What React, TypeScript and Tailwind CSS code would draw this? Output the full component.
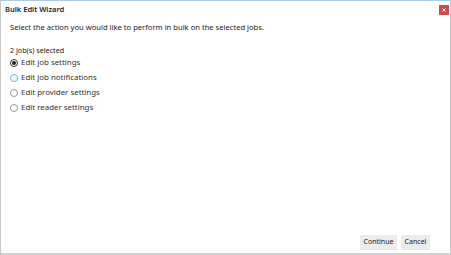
export default function App() {
  const options = [
    "Edit job settings",
    "Edit job notifications",
    "Edit provider settings",
    "Edit reader settings",
  ];

  return (
    <div className="w-[451px] h-[255px] bg-white" style={{ fontFamily: '"Noto Sans", "Open Sans", sans-serif' }}>
      <div className="w-[451px] h-[255px] flex flex-col border-t border-t-[#a9cbe8] border-l border-l-[#c8c8c8] border-r border-r-[#c8c8c8] border-b-2 border-b-[#d2d2d2]">
        {/* Title bar */}
        <div className="flex items-start justify-between pl-[4px] pr-[1px] h-[19px]">
          <span className="mt-[3px] text-[7.5px] leading-[10px] font-semibold text-[#1e1e36]">Bulk Edit Wizard</span>
          <button className="w-[10px] h-[10px] bg-[#d04b4b] flex items-center justify-center mt-[4px]">
            <svg width="4" height="4" viewBox="0 0 4 4">
              <path d="M0.5 0.5 L3.5 3.5 M3.5 0.5 L0.5 3.5" stroke="white" strokeWidth="1" />
            </svg>
          </button>
        </div>

        {/* Body */}
        <div className="flex-1 flex flex-col pl-[9px] pt-[1px]">
          <p className="text-[7.6px] leading-[12px] text-[#222]">
            Select the action you would like to perform in bulk on the selected jobs.
          </p>
          <div className="mt-[12px] text-[7.2px] leading-[10px] text-[#222]">2 job(s) selected</div>
          <div className="flex flex-col">
            {options.map((o, i) => (
              <label key={o} className="flex items-center gap-[3px] h-[15px] text-[7.9px] text-[#333]">
                <span
                  className={`w-[8px] h-[8px] rounded-full border flex items-center justify-center ${
                    i === 0 ? "border-[#333]" : i === 1 ? "border-[#7ab0e6]" : "border-[#999]"
                  }`}
                >
                  {i === 0 && <span className="w-[4px] h-[4px] rounded-full bg-[#222]" />}
                </span>
                {o}
              </label>
            ))}
          </div>
        </div>

        {/* Footer */}
        <div className="flex justify-end gap-[4px] pr-[20px] pb-[3px]">
          <button className="h-[15px] w-[37px] bg-[#ececec] text-[7px] text-[#222]">Continue</button>
          <button className="h-[15px] w-[29px] bg-[#ececec] text-[7px] text-[#222]">Cancel</button>
        </div>
      </div>
    </div>
  );
}
